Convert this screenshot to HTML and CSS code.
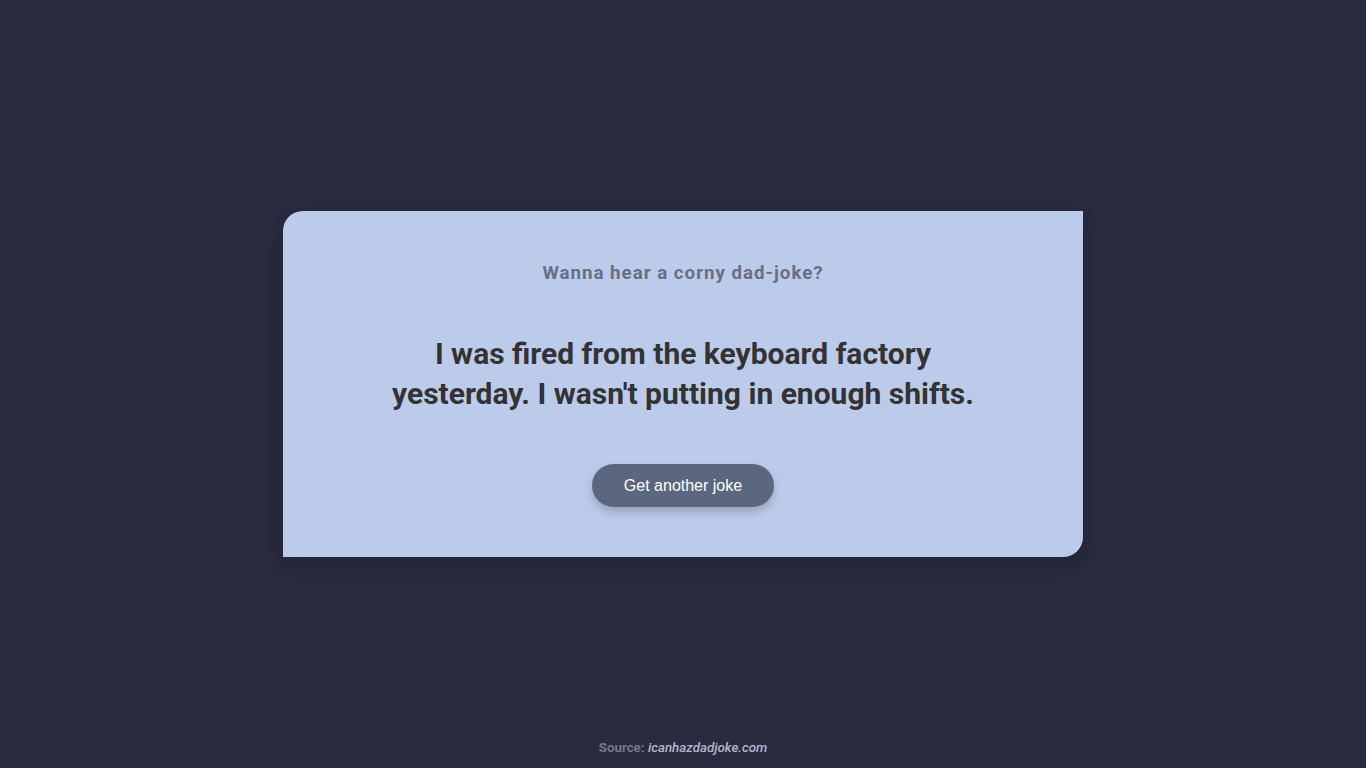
FILE: index.html
```html
<!DOCTYPE html>
<html lang="en">
<head>
<meta charset="utf-8">
<title>Dad Jokes</title>
<link rel="stylesheet" href="styles.css">
</head>
<body>
<div class="page">
  <div class="spacer"></div>
  <main class="card">
    <h3 class="title">Wanna hear a corny dad-joke?</h3>
    <p class="joke">I was fired from the keyboard factory yesterday. I wasn't putting in enough shifts.</p>
    <button class="btn" type="button">Get another joke</button>
  </main>
  <footer class="footer"><strong>Source:</strong> <em>icanhazdadjoke.com</em></footer>
</div>
</body>
</html>
```
FILE: styles.css
```css
* { box-sizing: border-box; }
html, body { margin: 0; padding: 0; }
body {
  background: #282b3e;
  font-family: Roboto, "Liberation Sans", sans-serif;
}
.page {
  height: 100vh;
  display: grid;
  grid-template-rows: 1fr auto 1fr;
  justify-items: center;
}
.card {
  width: 800px;
  background: #bdcbeb;
  border-radius: 20px 0 20px 0;
  box-shadow: 0 8px 16px rgba(0, 0, 0, 0.15);
  padding: 50px 20px;
  display: flex;
  flex-direction: column;
  align-items: center;
  gap: 50px;
  text-align: center;
}
.title {
  margin: 0;
  padding-top: 1px;
  font-size: 18.72px;
  line-height: 22px;
  font-weight: 700;
  letter-spacing: 1px;
  color: #686f85;
}
.joke {
  margin: 0;
  max-width: 600px;
  font-size: 30px;
  line-height: 40px;
  font-weight: 700;
  color: #333333;
}
.btn {
  border: 0;
  background: #5b667f;
  color: #ffffff;
  font-family: Arial, "Liberation Sans", sans-serif;
  font-size: 16px;
  height: 43px;
  width: 182px;
  border-radius: 22px;
  box-shadow: 0 5px 10px rgba(0, 0, 0, 0.2);
  cursor: pointer;
}
.footer {
  align-self: end;
  padding-bottom: 13px;
  font-size: 13.33px;
  font-weight: 500;
  color: #767988;
}
.footer strong { font-weight: 700; }
.footer em { font-style: italic; color: #b4b8c8; }
```
